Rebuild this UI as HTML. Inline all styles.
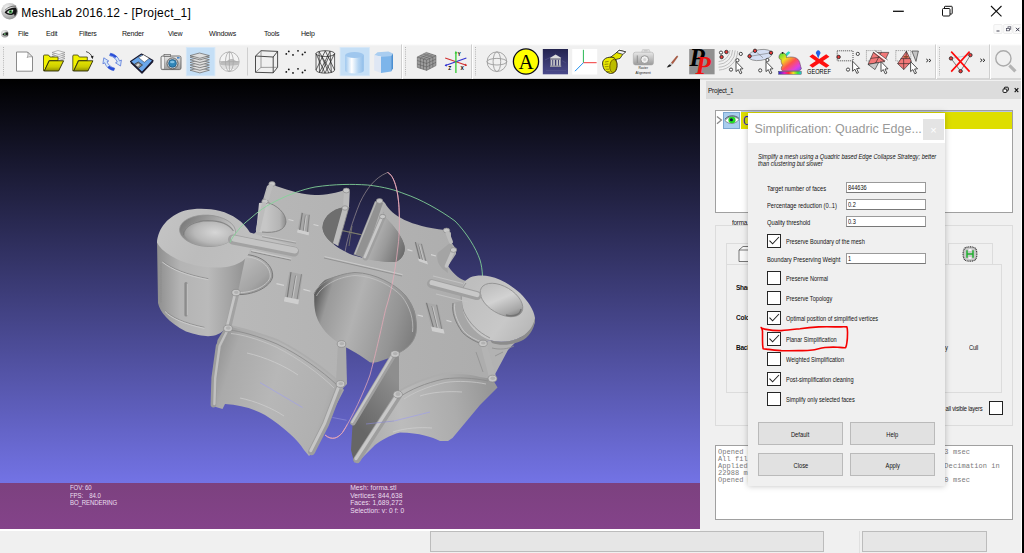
<!DOCTYPE html>
<html>
<head>
<meta charset="utf-8">
<title>MeshLab 2016.12 - [Project_1]</title>
<style>
html,body{margin:0;padding:0;}
body{width:1024px;height:553px;overflow:hidden;background:#f0f0f0;font-family:"Liberation Sans",sans-serif;position:relative;}
.abs{position:absolute;}
#titlebar{left:0;top:0;width:1024px;height:27px;background:#fff;}
#title{left:21.3px;top:5.6px;font-size:12px;letter-spacing:0.19px;color:#000;white-space:nowrap;}
#menubar{left:0;top:27px;width:1024px;height:19px;background:linear-gradient(#fff 0,#fff 17px,#f0f0f0 19px);}
.menu{position:absolute;top:30px;font-size:7px;color:#111;white-space:nowrap;letter-spacing:-0.2px;}
#toolbar{left:0;top:46px;width:1024px;height:33px;background:#f0f0f0;}
.tsep{position:absolute;top:46px;width:1px;height:30px;background:#d0d0d0;}
.thandle{position:absolute;top:47px;width:1px;height:28px;background-image:linear-gradient(#b0b0b0 50%,transparent 50%);background-size:1px 2px;}
.ticon{position:absolute;top:49px;width:24px;height:24px;}
.thl{position:absolute;top:47px;width:29px;height:29px;background:#cce4f7;border:0;}
#viewport{left:0;top:79px;width:700px;height:450px;background:linear-gradient(#000 0%,#8080ff 100%);overflow:hidden;}
#vband{left:0;top:404px;width:700px;height:46px;background:linear-gradient(#7c417f,#84438a);}
.vtxt{position:absolute;font-size:6.7px;line-height:7.5px;color:#eadfee;white-space:pre;letter-spacing:-0.1px;transform:scaleX(.9);transform-origin:0 0;}
#statusbar{left:0;top:529px;width:1024px;height:24px;background:#f0f0f0;}
.sbox{position:absolute;top:531px;height:21px;background:#e6e6e6;border:1px solid #bcbcbc;box-sizing:border-box;}
#dock{left:700px;top:80.2px;width:324px;height:449px;background:#f0f0f0;}
#docktitle{left:706px;top:81px;width:318px;height:18px;background:#dcdcdc;}
.small{font-size:6.5px;color:#111;white-space:nowrap;letter-spacing:-0.25px;}
#layerlist{left:715px;top:110px;width:298px;height:103px;background:#fff;border:1px solid #a0a0a0;box-sizing:border-box;}
#logbox{left:715px;top:445px;width:298px;height:75px;background:#fff;border:1px solid #a0a0a0;box-sizing:border-box;}
.log{position:absolute;font-family:"Liberation Mono",monospace;font-size:7px;letter-spacing:0.07px;line-height:7px;color:#7a7a7a;white-space:pre;}
#dialog{left:748px;top:113px;width:197px;height:373px;background:#f0f0f0;box-shadow:0 0 6px rgba(0,0,0,0.25);}
#dlgtitle{left:0;top:0;width:197px;height:30px;background:#fff;}
#dlgtitletext{left:6.4px;top:9px;font-size:12.5px;color:#999;white-space:nowrap;}
#dlgclose{left:175px;top:6px;width:21px;height:21px;background:#e4e4e4;color:#fff;font-size:11px;text-align:center;line-height:23px;}
.dl{position:absolute;left:18.5px;font-size:7px;color:#111;white-space:nowrap;line-height:8px;transform:scaleX(.825);transform-origin:0 50%;}
.t{display:inline-block;transform:scaleX(.825);transform-origin:0 50%;}
.tc{display:inline-block;transform:scaleX(.825);transform-origin:50% 50%;}
.din{position:absolute;left:98px;width:80px;height:11px;box-sizing:border-box;border:1px solid #9a9a9a;border-bottom-color:#777;background:#fff;font-size:6.8px;line-height:9px;padding-left:0.8px;color:#111;}
.cb{position:absolute;left:18.5px;width:14px;height:14px;box-sizing:border-box;border:1.4px solid #262626;background:#fff;line-height:0;}
.cbl{position:absolute;left:38px;font-size:7px;color:#111;white-space:nowrap;line-height:8px;transform:scaleX(.8);transform-origin:0 50%;}
.btn{position:absolute;width:85px;height:23px;box-sizing:border-box;border:1px solid #bababa;background:#e1e1e1;font-size:7px;color:#111;text-align:center;line-height:23px;}
</style>
</head>
<body>
<!-- TITLE BAR -->
<div id="titlebar" class="abs"></div>
<div id="title" class="abs">MeshLab 2016.12 - [Project_1]</div>
<!-- MENU BAR -->
<div id="menubar" class="abs"></div>
<span class="menu" style="left:18px">File</span>
<span class="menu" style="left:46px">Edit</span>
<span class="menu" style="left:79px">Filters</span>
<span class="menu" style="left:122px">Render</span>
<span class="menu" style="left:168px">View</span>
<span class="menu" style="left:209px">Windows</span>
<span class="menu" style="left:264px">Tools</span>
<span class="menu" style="left:301px">Help</span>
<!-- APPICONS -->
<svg class="abs" style="left:0;top:0" width="22" height="42" viewBox="0 0 22 42">
<defs><radialGradient id="gsph" cx="0.35" cy="0.3" r="0.8"><stop offset="0" stop-color="#f4f4f4"/><stop offset="0.6" stop-color="#bdbdbd"/><stop offset="1" stop-color="#8a8a8a"/></radialGradient></defs>
<circle cx="9.6" cy="11.2" r="8.3" fill="url(#gsph)"/>
<path d="M4.6 12.6 C6.4 9.4,10.4 7.6,15.6 7.4 C16.8 8.4,17.2 10.4,16.6 12.4 C16.2 14.2,15.4 15.6,14.6 16.2 C14.8 14.6,14.2 14,13 14.4 C10.4 15.4,7 15.2,4.6 12.6Z" fill="#151515"/>
<path d="M6.8 12.3 C8.2 10.4,10.6 9.6,13.2 9.8 C13.4 11.4,12.6 12.8,11.4 13.4 C9.6 13.8,8 13.4,6.8 12.3Z" fill="#e4e4e4"/>
<ellipse cx="10.6" cy="11.7" rx="1.9" ry="1.7" fill="#4fae5a"/><circle cx="10.4" cy="11.6" r="0.8" fill="#1a2a1a"/>
<path d="M5 10.2 C8 7,12 5.8,16 6.2" fill="none" stroke="#555" stroke-width="0.8"/>
<circle cx="4.8" cy="33.8" r="3.8" fill="url(#gsph)"/>
<path d="M2.4 34.6 C3.4 33,5.2 32.2,7.6 32.2 C8.2 33,8.2 34.6,7.2 36 C7.2 35.2,6.8 35,6.2 35.2 C5 35.6,3.4 35.6,2.4 34.6Z" fill="#151515"/>
<ellipse cx="4.9" cy="34.1" rx="1" ry="0.8" fill="#7fce88"/>
</svg>
<!-- /APPICONS -->
<!-- TOOLBAR -->
<div id="toolbar" class="abs"></div>
<!-- TBSVG -->
<svg class="abs" style="left:0;top:43px" width="1024" height="38" viewBox="0 43 1024 38" font-family="Liberation Sans, sans-serif">
<defs>
<linearGradient id="gcyl" x1="0" x2="1" y1="0" y2="0"><stop offset="0" stop-color="#9cc6ee"/><stop offset="0.35" stop-color="#ffffff"/><stop offset="0.7" stop-color="#b5d5f2"/><stop offset="1" stop-color="#8fbde9"/></linearGradient>
<linearGradient id="gfold" x1="0" x2="0" y1="0" y2="1"><stop offset="0" stop-color="#e6e600"/><stop offset="0.6" stop-color="#cccc00"/><stop offset="1" stop-color="#8e8e00"/></linearGradient>
<linearGradient id="gcam" x1="0" x2="0" y1="0" y2="1"><stop offset="0" stop-color="#e8e8e8"/><stop offset="1" stop-color="#9a9a9a"/></linearGradient>
<linearGradient id="gbld" x1="0" x2="0" y1="0" y2="1"><stop offset="0" stop-color="#23234f"/><stop offset="1" stop-color="#4b4b8c"/></linearGradient>
<linearGradient id="grain" x1="0" x2="1" y1="0" y2="0"><stop offset="0" stop-color="#2030d0"/><stop offset="0.25" stop-color="#e020c0"/><stop offset="0.45" stop-color="#ff3030"/><stop offset="0.65" stop-color="#f0e020"/><stop offset="0.85" stop-color="#30e040"/><stop offset="1" stop-color="#20c0e0"/></linearGradient>
<linearGradient id="gbun" x1="0" x2="1" y1="0" y2="1"><stop offset="0" stop-color="#30e040"/><stop offset="0.3" stop-color="#f0e020"/><stop offset="0.55" stop-color="#ff5050"/><stop offset="0.8" stop-color="#e040e0"/><stop offset="1" stop-color="#7060f0"/></linearGradient>
<g id="cursor"><path d="M0 0 L0 10 L2.3 8 L4.2 12.2 L5.9 11.4 L4 7.4 L7 7.2 Z" fill="#fff" stroke="#333" stroke-width="0.85" stroke-linejoin="round"/></g>
<g id="opt"><circle r="1.6" fill="#fff" stroke="#333" stroke-width="0.9"/></g>
<g id="rpt"><circle r="1.7" fill="#f03838" stroke="#2a2a2a" stroke-width="0.9"/></g>
</defs>
<!-- bottom edge line -->
<rect x="0" y="78" width="1024" height="2.2" fill="#d6d6d6"/>
<!-- handles and separators -->
<g stroke="#b4b4b4" stroke-width="1" stroke-dasharray="1 1.2"><path d="M3.5 47 V76"/><path d="M405.5 47 V76"/><path d="M475.5 47 V76"/><path d="M939.5 47 V76"/></g>
<g stroke="#cfcfcf" stroke-width="1"><path d="M247.5 47.5 V75.5"/><path d="M401.5 44.5 V79"/><path d="M471.5 44.5 V79"/><path d="M935.5 44.5 V79"/><path d="M989.5 44.5 V79"/></g>
<g stroke="#fff" stroke-width="1"><path d="M402.5 44.5 V79"/><path d="M472.5 44.5 V79"/><path d="M936.5 44.5 V79"/><path d="M990.5 44.5 V79"/></g>
<!-- highlights -->
<rect x="186.3" y="47.4" width="28.6" height="28.4" fill="#c5dff6" stroke="#d6e8f8" stroke-width="0.8"/>
<rect x="340.1" y="47.4" width="29.4" height="28.4" fill="#c5dff6" stroke="#d6e8f8" stroke-width="0.8"/>
<!-- new doc -->
<path d="M16.5 52 H27.5 L32.5 57 V71.2 H16.5 Z" fill="#fff" stroke="#8a8a8a" stroke-width="1" stroke-linejoin="round"/>
<path d="M27.5 52 C28.5 54,28 56,27 57.5 C29 56.6,31 56.6,32.5 57 Z" fill="#e6e6e6" stroke="#8a8a8a" stroke-width="0.7"/>
<!-- folder 1 with layers -->
<g>
<g fill="#f4f4f4" stroke="#777" stroke-width="0.5"><path d="M52 58.5 L58 56.5 L65 58.5 L59 60.5Z"/><path d="M52 56.5 L58 54.5 L65 56.5 L59 58.5Z"/><path d="M52 54.5 L58 52.5 L65 54.5 L59 56.5Z"/><path d="M52 52.5 L58 50.5 L65 52.5 L59 54.5Z"/></g>
<path d="M43.5 70.8 V56 Q43.5 55 44.5 55 H48.5 L50 57 H58 V60.5 H49 L44.5 70.8 Z" fill="#f2f200" stroke="#3a3a10" stroke-width="0.8" stroke-linejoin="round"/>
<path d="M44.3 71 L49.3 60.8 H63.6 L58.6 71 Z" fill="url(#gfold)" stroke="#2a2a08" stroke-width="0.9" stroke-linejoin="round"/>
</g>
<!-- folder 2 with arrow -->
<g>
<path d="M72.8 70.8 V56 Q72.8 55 73.8 55 H77.8 L79.3 57 H87.3 V60.5 H78.3 L73.8 70.8 Z" fill="#f2f200" stroke="#3a3a10" stroke-width="0.8" stroke-linejoin="round"/>
<path d="M73.6 71 L78.6 60.8 H92.9 L87.9 71 Z" fill="url(#gfold)" stroke="#2a2a08" stroke-width="0.9" stroke-linejoin="round"/>
<path d="M86 51.6 C89.5 52.5,91.8 55,92.3 58" fill="none" stroke="#222" stroke-width="0.8"/><path d="M90.8 56.2 L92.6 59.3 L93.6 55.8Z" fill="#222"/>
</g>
<!-- reload -->
<g stroke-linejoin="round">
<path d="M110.5 53.2 C115 54,118.5 57.5,119.5 61 L121.4 60 L120.5 66 L115.5 62.8 L117.3 62 C116 59,113.5 56.5,109.6 55.6 Z" fill="#d4e6f8" stroke="#4668d6" stroke-width="0.7"/>
<path d="M110.5 53.2 C113 53.6,115.4 54.8,117 56.6 L115 58 C113.6 56.7,111.8 55.9,109.6 55.6Z" fill="#2a4fd8"/>
<path d="M113.8 70.6 C109.3 69.8,105.8 66.3,104.8 62.8 L102.9 63.8 L103.8 57.8 L108.8 61 L107 61.8 C108.3 64.8,110.8 67.3,114.7 68.2 Z" fill="#d4e6f8" stroke="#4668d6" stroke-width="0.7"/>
<path d="M113.8 70.6 C111.3 70.2,108.9 69,107.3 67.2 L109.3 65.8 C110.7 67.1,112.5 67.9,114.7 68.2Z" fill="#2a4fd8"/>
</g>
<!-- floppy -->
<g stroke-linejoin="round">
<path d="M130.5 61.5 L141.5 54 L153 60.5 L142 72.3 Z" fill="#6aa6ea" stroke="#1a1a30" stroke-width="1.1"/>
<path d="M138.6 57.6 L143.5 54.8 L149.3 58.3 L144.3 62.3 Z" fill="#fff" stroke="#333" stroke-width="0.5"/>
<path d="M134.3 64.3 L138.3 62 L142.5 65 L138.6 68.2 Z" fill="#888" stroke="#222" stroke-width="0.6"/>
<path d="M136 65.4 L138.2 63.6 L139.8 64.8 L137.8 66.6Z" fill="#ddd"/>
<path d="M131 62.5 L142 73 L153 61.2" fill="none" stroke="#1a1a30" stroke-width="1.4"/>
</g>
<!-- camera -->
<g>
<rect x="161" y="56" width="20" height="13.6" rx="1.6" fill="url(#gcam)" stroke="#555" stroke-width="0.8"/>
<rect x="164" y="54.3" width="6.5" height="2.4" fill="#cfcfcf" stroke="#555" stroke-width="0.6"/>
<rect x="161.4" y="56.6" width="2.8" height="12.4" fill="#f0f0f0" stroke="#777" stroke-width="0.4"/>
<rect x="177" y="57" width="2.6" height="1.6" fill="#4a86c8"/>
<circle cx="172.5" cy="63.4" r="5.5" fill="#d8d8d8" stroke="#444" stroke-width="0.8"/>
<circle cx="172.5" cy="63.4" r="3.9" fill="#2f86b8" stroke="#1d4f78" stroke-width="0.7"/>
<ellipse cx="172.3" cy="62" rx="2.3" ry="1.3" fill="#7fc0e4"/>
</g>
<!-- layers stack -->
<g fill="#dedede" stroke="#666" stroke-width="0.7" stroke-linejoin="round">
<path d="M190 70.2 L199.5 67.6 L209.4 70.2 L199.9 72.9Z"/><path d="M190 67.6 L199.5 65 L209.4 67.6 L199.9 70.3Z"/><path d="M190 65 L199.5 62.4 L209.4 65 L199.9 67.7Z"/><path d="M190 62.4 L199.5 59.8 L209.4 62.4 L199.9 65.1Z"/><path d="M190 59.8 L199.5 57.2 L209.4 59.8 L199.9 62.5Z"/><path d="M190 57.2 L199.5 54.6 L209.4 57.2 L199.9 59.9Z"/><path d="M190 55.6 L199.5 53 L209.4 55.6 L199.9 58.3Z"/>
</g>
<!-- globe raster -->
<g fill="none" stroke="#a8a8a8" stroke-width="0.8">
<circle cx="229.4" cy="61.7" r="9.8" fill="#f4f4f4"/>
<path d="M220 62.8 C223 60.5,225 62,227 61 C230 58.6,233 58.4,235 60.4 C236.6 61.4,238 61,239 61.6 L239 64.5 C236 66,223 66,220 64.5Z" fill="#bdbdbd" stroke="none"/>
<path d="M220.5 66 H238.4 M221.6 68 H237.2" stroke="#c4c4c4"/>
<ellipse cx="229.4" cy="61.7" rx="3.9" ry="9.8"/><path d="M219.6 61.7 H239.2 M229.4 51.9 V71.5"/>
</g>
<!-- cube -->
<g fill="none" stroke="#222" stroke-width="0.8" stroke-linejoin="round">
<path d="M255.5 56 L261 50.7 L277.6 51.4 L273.2 57 Z"/><path d="M255.5 56 V72.3 L273.2 72.8 V57"/><path d="M273.2 72.8 L277.6 67.3 V51.4"/>
<path d="M261 50.7 V67.4 L255.5 72.3 M261 67.4 L277.6 67.3" stroke="#666" stroke-width="0.6"/>
</g>
<!-- dots -->
<g fill="#111">
<circle cx="286.3" cy="53.9" r="0.9"/><circle cx="288.8" cy="51.4" r="0.9"/><circle cx="293" cy="54.9" r="0.9"/><circle cx="298" cy="50.8" r="0.9"/><circle cx="302.5" cy="54.5" r="0.9"/><circle cx="305" cy="52.3" r="0.9"/>
<circle cx="286.3" cy="71.9" r="0.9"/><circle cx="288.8" cy="69.4" r="0.9"/><circle cx="293" cy="72.9" r="0.9"/><circle cx="298" cy="68.8" r="0.9"/><circle cx="302.5" cy="72.5" r="0.9"/><circle cx="305" cy="70.3" r="0.9"/>
</g>
<!-- wire cylinder -->
<g fill="none" stroke="#222" stroke-width="0.7">
<ellipse cx="325.3" cy="53.6" rx="9.3" ry="2.9"/><path d="M316 53.6 V70 C316 74.2,334.6 74.2,334.6 70 V53.6"/>
<path d="M316 53.6 L325 73.1 L334.6 53.6 M316 70 L325.3 50.8 L334.6 70 M319 51.6 L319.5 72.4 L330 51.2 L331.4 72.4 L319 51.6 M321.5 56.3 L328.8 73 M329 56.3 L321.6 73"/>
</g>
<!-- smooth cylinder -->
<path d="M345.2 55 V70.6 C345.2 74.4,363.8 74.4,363.8 70.6 V55 Z" fill="url(#gcyl)"/>
<ellipse cx="354.5" cy="55" rx="9.3" ry="2.9" fill="#9fc7ee"/>
<!-- flat cylinder -->
<g>
<path d="M374.2 55.2 L377.5 52.2 L388.5 51.6 L393 53.4 L391.2 56 L381 56.5 Z" fill="#a9cdf0"/>
<path d="M374.2 55.2 L381 56.5 V73 L374.2 70.6 Z" fill="#dfe7f4"/>
<path d="M381 56.5 L391.2 56 V71.6 L381 73Z" fill="#7db5ea"/>
<path d="M391.2 56 L393 53.4 V68.6 L391.2 71.6Z" fill="#4a8fd2"/>
</g>
<!-- grid cube -->
<g stroke="#555" stroke-width="0.5" fill="#a8a8a8">
<path d="M417.3 57 L426.3 52.4 L436 55.6 V65.6 L426.6 70.4 L417.3 67.4Z" fill="#9c9c9c"/>
<path d="M417.3 57 L426.6 60 L436 55.6 M426.6 60 V70.4 M420.4 58 V68.4 M423.5 59 V69.4 M429.7 58.5 V68.8 M432.8 57 V67.2 M417.3 60.5 L426.6 63.5 L436 59 M417.3 64 L426.6 67 L436 62.3" fill="none"/>
<path d="M420.3 55.5 L429.8 58.5 M423.3 54 L432.8 57 M420.4 58 L429.6 53.6 M423.5 59 L432.8 54.6" fill="none" stroke-width="0.4"/>
</g>
<!-- axes XYZ -->
<g>
<path d="M445.2 58 L466.3 65.2" stroke="#d03030" stroke-width="1.1"/><path d="M466.4 58 L445.4 65.6" stroke="#3030d0" stroke-width="1.1"/>
<path d="M455.9 52 V73" stroke="#30c830" stroke-width="1.3"/>
<path d="M454.6 53.6 L455.9 50.8 L457.2 53.6Z" fill="#30c830"/>
<path d="M464.6 66.2 L467.2 65.6 L465.4 63.6Z" fill="#d03030"/><path d="M447 66.4 L444.6 65.8 L446.4 63.8Z" fill="#3030d0"/>
<text x="457.6" y="55.6" font-size="5" font-weight="bold" fill="#000">Y</text><text x="448.2" y="69.8" font-size="5" font-weight="bold" fill="#000">Z</text><text x="460.6" y="69.8" font-size="5" font-weight="bold" fill="#000">X</text>
</g>
<!-- wire globe -->
<g fill="none" stroke="#9c9c9c" stroke-width="0.9">
<circle cx="496.9" cy="61.7" r="9.8"/><ellipse cx="496.9" cy="61.7" rx="3.8" ry="9.8"/><ellipse cx="496.9" cy="61.7" rx="9.8" ry="3.3"/>
</g>
<!-- A -->
<circle cx="526" cy="61.5" r="12.6" fill="#ffff00" stroke="#0a0a1a" stroke-width="1.3"/>
<text x="526" y="69" font-family="Liberation Serif, serif" font-size="21" text-anchor="middle" fill="#000">A</text>
<!-- building -->
<rect x="542.8" y="49" width="25.2" height="25.3" fill="url(#gbld)"/>
<g fill="#c8c8c8"><path d="M549.8 58 L555.6 54.4 L561.4 58Z" fill="#dcdcdc"/><rect x="550.2" y="58.2" width="10.8" height="1.4" fill="#b4b4b4"/><rect x="550.6" y="59.8" width="1.7" height="6"/><rect x="553.2" y="59.8" width="1.7" height="6"/><rect x="556.3" y="59.8" width="1.7" height="6"/><rect x="558.9" y="59.8" width="1.7" height="6"/><rect x="550" y="65.6" width="11.2" height="1.2" fill="#aaa"/></g>
<path d="M545 60 L550 57.6 M562 60.6 L566 63 M546 70.5 H566" stroke="#5a5a90" stroke-width="0.5" fill="none"/>
<!-- axes RGB -->
<rect x="572.2" y="49" width="25" height="25.5" fill="#fff"/>
<path d="M583.4 62.7 V49.8" stroke="#10b040" stroke-width="0.9"/><path d="M583.4 62.7 H596.6" stroke="#f02020" stroke-width="0.9"/><path d="M583.4 62.7 L575 71.2" stroke="#2090f0" stroke-width="1"/>
<!-- tape -->
<g stroke-linejoin="round">
<g fill="#fff" stroke="#fff" stroke-width="2.4"><path d="M609.5 58 L616 53 L619 50.2 L625.6 51.8 L622.6 54.6 L620 58.5 L614 59.8 Z"/><path d="M602.6 64 C602 58.5,608 56.4,613 57.4 C616.5 58.6,617.4 63,617 67 C616.5 71.5,613.5 73.8,610.5 73.4 C605.5 72.6,603 69,602.6 64 Z"/></g>
<path d="M609.5 58 L616 53 L619 50.2 L625.6 51.8 L622.6 54.6 L620 58.5 L614 59.8 Z" fill="#e4e400" stroke="#1a1a1a" stroke-width="0.8"/>
<path d="M616.8 52.6 L619 50.2 L625.6 51.8 L623 54.4 Z" fill="#f4f4fa" stroke="#1a1a1a" stroke-width="0.7"/>
<path d="M602.6 64 C602 58.5,608 56.4,613 57.4 C616.5 58.6,617.4 63,617 67 C616.5 71.5,613.5 73.8,610.5 73.4 C605.5 72.6,603 69,602.6 64 Z" fill="#eaea00" stroke="#1a1a1a" stroke-width="0.9"/>
<ellipse cx="613.3" cy="66" rx="3.5" ry="6.6" fill="#bcbc00" stroke="#4a2a00" stroke-width="0.6" transform="rotate(6 613.3 66)"/>
<path d="M605 62 L608.6 61.4 M604.6 64.4 L608.4 64 M604.8 66.8 L608.6 66.6 M605.6 69.2 L609 69.2 M607 71.4 L609.8 71.6" stroke="#5a4a00" stroke-width="0.6" fill="none"/>
</g>
<!-- raster alignment camera -->
<g>
<rect x="633.3" y="52.2" width="20.2" height="12.8" rx="2.2" fill="url(#gcam)" stroke="#a4a4a4" stroke-width="0.5"/>
<path d="M641.6 52.2 L642.6 49.6 H649.2 L650.2 52.2Z" fill="#e0e0e0" stroke="#b0b0b0" stroke-width="0.4"/>
<path d="M644 50.8 H647.6" stroke="#aaa" stroke-width="0.5"/>
<circle cx="644.7" cy="59.6" r="3.9" fill="#f0f0f0" stroke="#909090" stroke-width="0.9"/><circle cx="644.7" cy="59.6" r="1.6" fill="#d4d4d4"/>
<rect x="636.8" y="55.4" width="0.9" height="7.6" fill="#8a8a8a"/>
<text x="643.2" y="69.2" font-size="3.7" text-anchor="middle" fill="#222" textLength="9.6" lengthAdjust="spacingAndGlyphs">Raster</text><text x="643.2" y="73.8" font-size="3.7" text-anchor="middle" fill="#222" textLength="15.2" lengthAdjust="spacingAndGlyphs">Alignment</text>
</g>
<!-- brush -->
<g><path d="M671.2 62.8 L677 55.8 L678 56.6 L672.6 64Z" fill="#b05a40" stroke="#703020" stroke-width="0.3"/><path d="M669.6 64.3 L671.2 62.8 L672.6 64 L671.4 65.6Z" fill="#bbb"/><path d="M666.8 67.5 C668 65.5,669 64.8,669.6 64.3 L671.4 65.6 C670.6 66.6,669 67.4,666.8 67.5Z" fill="#222"/></g>
<!-- PP -->
<rect x="689.2" y="49" width="25.4" height="25.3" fill="#909090"/>
<text x="689.6" y="65.8" font-family="Liberation Serif, serif" font-size="25" font-style="italic" font-weight="bold" fill="#000">P</text>
<text x="695.6" y="74" font-family="Liberation Serif, serif" font-size="25" font-style="italic" font-weight="bold" fill="#ee1111">P</text>
<!-- select points -->
<g fill="none" stroke="#b0b0b0" stroke-width="0.8"><path d="M730 50 A12 12 0 0 1 718.6 61.6 M732.6 50 A14.6 14.6 0 0 1 718.6 64.4 M735.2 50.4 A17 17 0 0 1 718.6 67.2 M737.6 51 A19.4 19.4 0 0 1 719 70"/></g>
<use href="#opt" x="721" y="52.6"/><use href="#rpt" x="726.4" y="52"/><use href="#rpt" x="721.6" y="57"/><use href="#opt" x="740.8" y="53.9"/><use href="#opt" x="737.4" y="60.2"/><use href="#opt" x="731" y="69.6"/>
<use href="#cursor" x="736" y="61.6"/>
<!-- select ellipse -->
<ellipse cx="760.2" cy="55" rx="12" ry="5.4" transform="rotate(-8 760.2 55)" fill="#d4def2" stroke="#888" stroke-width="0.8"/>
<path d="M749.6 56.4 L771 52.8 M757 52.6 L763 57.8" stroke="#666" stroke-width="0.5"/>
<use href="#rpt" x="755" y="50.8"/><use href="#rpt" x="749.6" y="56.2"/><use href="#rpt" x="771" y="52.8"/><use href="#opt" x="767.4" y="60"/><use href="#opt" x="760.2" y="70.4"/>
<use href="#cursor" x="766" y="61.6"/>
<!-- bunny -->
<g>
<path d="M783.6 55.4 L788.4 51.2 L790.4 52.6 L786.6 56.6Z" fill="#30d8c0"/>
<path d="M779 58 C778.6 55,780.6 52.6,783.4 53 C785.6 53.4,786.8 55.6,786.4 57.6 C790 56.6,796.4 56.4,798.8 60.4 C800.4 63,800.2 66,801.4 68.4 C801.2 70,799.6 70.8,797 70.8 L782.4 70.8 C780.8 69.6,781 67,782.6 65.4 C781.4 63.6,780.8 61.4,781.2 59.6 C780.2 59.4,779.2 58.8,779 58Z" fill="url(#gbun)" stroke="#503050" stroke-width="0.5"/>
<circle cx="782.6" cy="52.8" r="0.9" fill="#111"/>
<rect x="778.6" y="71.4" width="22.6" height="2.8" fill="url(#grain)" stroke="#334" stroke-width="0.4"/>
</g>
<!-- georef -->
<g>
<path d="M809.4 56.6 L812.6 54.2 L819.2 59 L826.2 54.2 L829.4 56.8 L823 61 L829.4 65.4 L826.2 67.8 L819.2 63.2 L812.6 67.8 L809.4 65.2 L815.8 61Z" fill="#ff1010"/>
<path d="M818.2 58.6 L816.6 54.4 A2.3 2.3 0 1 1 819.8 54.4Z" fill="#2060e8"/>
<text x="819" y="74" font-size="7" text-anchor="middle" fill="#000" textLength="23.8" lengthAdjust="spacingAndGlyphs">GEOREF</text>
</g>
<!-- select rect -->
<rect x="837.2" y="50.8" width="15.8" height="10" fill="none" stroke="#333" stroke-width="0.9" stroke-dasharray="1 1"/>
<use href="#rpt" x="838.6" y="57"/><use href="#opt" x="857.8" y="53.9"/><use href="#opt" x="848" y="69.6"/>
<use href="#cursor" x="852.6" y="61.2"/>
<!-- tri select 1 -->
<g stroke="#222" stroke-width="0.6" stroke-linejoin="round">
<rect x="866.4" y="50.6" width="15" height="10.4" fill="none" stroke="#555" stroke-dasharray="1 1"/>
<path d="M873.4 52.4 L888.8 52.4 L884.4 61.6 Z" fill="#f27878"/>
<path d="M873.4 52.4 L868 64.4 L884.4 61.6 Z" fill="#f27878"/><path d="M870.6 58.4 L878.6 57.4 L875.6 63 M878.6 57.4 L881.2 52.6" fill="none"/>
<path d="M868 64.4 L875 69.6 L878.6 62.6Z" fill="#c8c8c8"/>
<path d="M874.4 51.2 L887 60.6" stroke="#fff" stroke-width="1.8"/><path d="M874.8 50.6 L887.6 60" stroke="#222" stroke-width="0.6"/>
</g>
<use href="#cursor" x="881" y="61.6"/>
<!-- tri select 2 -->
<g stroke="#222" stroke-width="0.6" stroke-linejoin="round">
<rect x="895.8" y="50.6" width="15" height="10.4" fill="none" stroke="#555" stroke-dasharray="1 1"/>
<path d="M906.4 51.2 L897.6 63.6 L903.8 69.6 L911.4 61.4Z" fill="#f27878"/>
<path d="M900.6 58.6 H910.4 M897.6 63.6 H909.6 M903.8 69.6 L903.6 58.6 M906.4 51.2 L906 58.6" fill="none"/>
<path d="M911.8 51 H918.4 L916 61.4Z" fill="#c4c4c4"/><path d="M903.6 56.8 H908.4" stroke="#8a4a20" stroke-width="1.4"/>
</g>
<use href="#cursor" x="910.6" y="61.6"/>
<!-- chevrons -->
<g fill="none" stroke="#111" stroke-width="0.9"><path d="M926.3 59 L928.2 60.5 L926.3 62 M929 59 L930.9 60.5 L929 62"/><path d="M980.3 58.8 L982.2 60.3 L980.3 61.8 M983 58.8 L984.9 60.3 L983 61.8"/></g>
<!-- red X tool -->
<g>
<path d="M951 58.4 L970.4 55.1" stroke="#9ab" stroke-width="0.6"/><path d="M951 58.4 L960.6 71.2 L970.4 55.1" fill="none" stroke="#333" stroke-width="0.6"/>
<use href="#rpt" x="951" y="58.4"/><use href="#rpt" x="970.4" y="55.1"/><use href="#rpt" x="960.6" y="71.2"/>
<path d="M951.2 51.6 L969.6 71.6 M969.6 51.6 L951.2 71.6" stroke="#ff0a0a" stroke-width="1.6"/>
</g>
<!-- magnifier -->
<circle cx="1003.4" cy="58.4" r="7.6" fill="none" stroke="#aaa" stroke-width="1.4"/>
<path d="M1009.4 65.4 L1015.4 71.4" stroke="#b4b4b4" stroke-width="3.2"/>
</svg>
<!-- /TBSVG -->
<!-- VIEWPORT -->
<div id="viewport" class="abs">
<!-- MESH -->
<svg class="abs" style="left:0;top:0" width="700" height="450" viewBox="0 79 700 450">
<defs>
<linearGradient id="mC1" x1="157" x2="250" y1="0" y2="0" gradientUnits="userSpaceOnUse"><stop offset="0" stop-color="#8e8e8e"/><stop offset="0.25" stop-color="#b4b4b4"/><stop offset="0.55" stop-color="#bababa"/><stop offset="0.8" stop-color="#a2a2a2"/><stop offset="1" stop-color="#8c8c8c"/></linearGradient>
<linearGradient id="mC1top" x1="160" x2="250" y1="215" y2="265" gradientUnits="userSpaceOnUse"><stop offset="0" stop-color="#c4c4c4"/><stop offset="0.5" stop-color="#bcbcbc"/><stop offset="1" stop-color="#c0c0c0"/></linearGradient>
<linearGradient id="mHole1" x1="185" x2="225" y1="220" y2="246" gradientUnits="userSpaceOnUse"><stop offset="0" stop-color="#7c7c7c"/><stop offset="0.5" stop-color="#a4a4a4"/><stop offset="1" stop-color="#cacaca"/></linearGradient>
<linearGradient id="mFinL" x1="212" x2="340" y1="380" y2="420" gradientUnits="userSpaceOnUse"><stop offset="0" stop-color="#9a9a9a"/><stop offset="0.1" stop-color="#aaaaaa"/><stop offset="0.45" stop-color="#b7b7b7"/><stop offset="0.85" stop-color="#b0b0b0"/><stop offset="1" stop-color="#a0a0a0"/></linearGradient>
<linearGradient id="mFinR" x1="370" x2="490" y1="420" y2="400" gradientUnits="userSpaceOnUse"><stop offset="0" stop-color="#b0b0b0"/><stop offset="0.25" stop-color="#bcbcbc"/><stop offset="0.7" stop-color="#acacac"/><stop offset="1" stop-color="#989898"/></linearGradient>
<linearGradient id="mWallC" x1="315" x2="415" y1="300" y2="330" gradientUnits="userSpaceOnUse"><stop offset="0" stop-color="#5e5e5e"/><stop offset="0.12" stop-color="#9a9a9a"/><stop offset="0.4" stop-color="#b2b2b2"/><stop offset="0.8" stop-color="#949494"/><stop offset="1" stop-color="#7e7e7e"/></linearGradient>
<linearGradient id="mWallT" x1="368" x2="405" y1="235" y2="250" gradientUnits="userSpaceOnUse"><stop offset="0" stop-color="#bcbcbc"/><stop offset="0.5" stop-color="#9a9a9a"/><stop offset="1" stop-color="#6c6c6c"/></linearGradient>
<linearGradient id="mWallL" x1="245" x2="272" y1="260" y2="290" gradientUnits="userSpaceOnUse"><stop offset="0" stop-color="#b8b8b8"/><stop offset="0.6" stop-color="#a4a4a4"/><stop offset="1" stop-color="#868686"/></linearGradient>
<linearGradient id="mInnerR" x1="352" x2="396" y1="420" y2="380" gradientUnits="userSpaceOnUse"><stop offset="0" stop-color="#666"/><stop offset="1" stop-color="#8e8e8e"/></linearGradient>
<linearGradient id="mC2" x1="470" x2="535" y1="285" y2="335" gradientUnits="userSpaceOnUse"><stop offset="0" stop-color="#bebebe"/><stop offset="0.6" stop-color="#c8c8c8"/><stop offset="1" stop-color="#b4b4b4"/></linearGradient>
<linearGradient id="mHole2" x1="485" x2="520" y1="287" y2="313" gradientUnits="userSpaceOnUse"><stop offset="0" stop-color="#bcbcbc"/><stop offset="0.45" stop-color="#d2d2d2"/><stop offset="0.8" stop-color="#a8a8a8"/><stop offset="1" stop-color="#767676"/></linearGradient>
<radialGradient id="mBowl1" cx="0.62" cy="0.45" r="0.7"><stop offset="0" stop-color="#d6d6d6"/><stop offset="0.6" stop-color="#b8b8b8"/><stop offset="1" stop-color="#8e8e8e"/></radialGradient>
<linearGradient id="mWallTL" x1="266" x2="286" y1="0" y2="0" gradientUnits="userSpaceOnUse"><stop offset="0" stop-color="#c6c6c6"/><stop offset="0.7" stop-color="#b4b4b4"/><stop offset="1" stop-color="#8c8c8c"/></linearGradient>
<linearGradient id="mPlate" x1="240" x2="480" y1="0" y2="0" gradientUnits="userSpaceOnUse"><stop offset="0" stop-color="#b8b8b8"/><stop offset="1" stop-color="#adadad"/></linearGradient>
<linearGradient id="mBg" x1="0" x2="0" y1="79" y2="529" gradientUnits="userSpaceOnUse"><stop offset="0" stop-color="#000"/><stop offset="1" stop-color="#8080ff"/></linearGradient>
</defs>
<!-- trackball circles behind mesh -->
<g fill="none" stroke-width="0.9">
<path d="M296 192.3 C302 190.2,308 188.4,315 187 C335 184,352 184,367.5 185 C385 187,395 190,405 194 C420 199,440 210,455 221 C466 232,476 248,480 260 C483 270,483 282,482 292" stroke="#7fce96"/>
<path d="M345 252 C347 240,352 222,360 202.5 C366 190,374 178,387.5 172.5" stroke="#9a8f92" stroke-width="0.7"/>
<path d="M387.5 172.5 C394 175,398 190,399 207.5 C400 225,399 240,397.5 250 C396 265,392 290,386 308 C383 320,378 345,370 375 C364 392,352 418,342.5 432.5 C338 438,332 441,325 435" stroke="#e5a2b2"/>
<path d="M332.5 417.5 L366 424" stroke="#8c8cd8" stroke-width="0.7"/><path d="M340 230 L362.5 235 M352 226 L349 246" stroke="#85856e" stroke-width="0.7"/>
</g>
<!-- under-walls -->
<path d="M314 294 C318 284,335 274,355 272.5 C375 273,395 284,405 295 C414 306,418 320,416 333 C414 342,408 349,396 354 L390 360 L370 360 C355 352,348 348,341 344 C330 338,320 326,316 312 Z" fill="url(#mWallC)" stroke="url(#mWallC)" stroke-width="5" stroke-linejoin="round"/>
<path d="M245 255 C262 256,273 266,272 277 C270 286,255 294,238 294 L240 262 Z" fill="url(#mWallL)" stroke="url(#mWallL)" stroke-width="4" stroke-linejoin="round"/>
<path d="M341 208 C330 211,323 218,322.5 227.5 C323 234,327 239,333 243.5 L343 208 Z" fill="#6e6e6e" stroke="#6e6e6e" stroke-width="3" stroke-linejoin="round"/>
<path d="M385 217 C390 222,400 232,404 244 C406 250,404 258,396 262 C385 262.5,374 261,364 258.5 Z" fill="url(#mWallT)" stroke="url(#mWallT)" stroke-width="4" stroke-linejoin="round"/>
<!-- ===== plate top-left wing + cutout wall between P1/P2 ===== -->
<path d="M256 232 L262 203 L267 186 L272 182.5 L276 186 C290 191,305 195,315 195 C325 195,338 193,346 189.5 L349.5 192 L349 206 L340 208 C330 211,323 218,322.5 227.5 C323 238,336 248,352.5 255 C368 260,385 262.5,396 262 C404 258,406 250,404 244 C400 232,390 222,385 217 L379 202 L381.5 199.5 L385 203 C392 216,410 226,445 230 L448 229 L451 233 L451 242 L456 249 L456 254 L448 266 C455 276,460 279,466 281 L470 278 L490 290 L490 340 L482.5 344 L492.5 379 L480 377 C462 373,440 374,412 385 L397 394 L395 354 C410 345,418 330,415 312 C410 295,395 285,380 278 C360 271,340 273,325 280 C315 288,312 298,316 315 C320 328,330 338,341 344 L340 384 C330 372,305 355,277 341 C255 332,235 328,227 328 L230 310 L238 294 C255 294,270 286,272 277 C273 266,262 256,245 255 L240 262 L236 250 Z" fill="url(#mPlate)"/>
<!-- cutout wall between P1 and P2 (top-left) -->
<path d="M259 203 L266 202 C277 205,286 213,286 222 C285 230,276 233.5,262 232 L256 232 Z" fill="url(#mWallTL)"/>
<path d="M266 202 C277 205,286 213,286 222 C285 230,276 233.5,262 232" fill="none" stroke="#7e7e7e" stroke-width="0.9"/>
<!-- top cutout contents -->
<path d="M381 204 L385 217 C390 222,400 232,404 244 C406 250,404 258,396 262 C385 262.5,374 261,364 258.5 Z" fill="url(#mWallT)"/>
<path d="M341 208 C330 211,323 218,322.5 227.5 C323 234,327 239,333 243.5 L343 208 Z" fill="#6e6e6e"/>
<path d="M342 230.6 L361 234.6" stroke="#85856e" stroke-width="0.7"/>
<!-- post inside top cutout -->
<path d="M375 201 L383 203 L364.5 258 L353.5 254.5 Z" fill="#929292"/><path d="M376 202 L355 254" stroke="#b8b8b8" stroke-width="1.4"/>
<path d="M382.8 217 L365.5 257.5" stroke="#a0a0a0" stroke-width="6" stroke-linecap="round"/><path d="M382 217 L364.8 257" stroke="#c8c8c8" stroke-width="2.6" stroke-linecap="round"/>
<ellipse cx="382.6" cy="216.6" rx="3" ry="2.2" fill="#c8c8c8" stroke="#8a8a8a" stroke-width="0.7"/>
<!-- P3/P4 posts -->
<path d="M344 190 L349.5 191 L349 207 L338 246 L333 243 L343 207 Z" fill="#bcbcbc"/><path d="M349 207 L338 246" stroke="#8a8a8a" stroke-width="0.8"/>
<!-- LEFT cutout wall -->
<path d="M245 255 C262 256,273 266,272 277 C270 286,255 294,238 294 L240 262 Z" fill="url(#mWallL)"/>
<path d="M246 254.5 C263 256,273.5 266,272.6 277 C270.5 286.5,255 294.6,239 294.6" fill="none" stroke="#7a7a7a" stroke-width="1"/><path d="M246 256.6 C261 258,271 267,270.2 277 C268.4 285,254 292.4,240 292.6" fill="none" stroke="#c9c9c9" stroke-width="0.9"/>
<!-- RIGHT cutout -->
<path d="M437.5 253 C436 262,440 268,448 273 L447 266 L454 250 L451 242 Z" fill="#a4a4a4"/>
<path d="M453 251 L446.5 266" stroke="#c2c2c2" stroke-width="3.6" stroke-linecap="round"/>
<!-- CENTRAL cutout wall -->
<path d="M314 294 C318 284,335 274,355 272.5 C375 273,395 284,405 295 C414 306,418 320,416 333 C414 342,408 349,396 354 L390 360 L370 360 C355 352,348 348,341 344 C330 338,320 326,316 312 Z" fill="url(#mWallC)"/>
<path d="M314 294 C318 284,335 274,355 272.5 C375 273,395 284,405 295 C414 306,418 320,416 333 C414 342,408 349,396 354" fill="none" stroke="#8c8c8c" stroke-width="1"/>
<path d="M316.5 296 C321 287,336 277,355 275.5 C374 276,392 286,402 296.5 C410 307,414 320,412.5 332" fill="none" stroke="#c6c6c6" stroke-width="0.7"/>
<!-- background seen below central wall -->
<path d="M341 345 C350 349,362 356,372 364 L392 357 L366 402 L352 424 L352 450 L340 384 Z" fill="url(#mBg)"/>
<!-- ===== C1 cylinder ===== -->
<path d="M157 240 L158 303 C160 312,168 322,186 331.5 C195 334.5,203 336,208 336.2 C215 336.2,221 334,226 328 L232 310 L238 292 L246 254 L230 262 L200 262 L170 252 Z" fill="url(#mC1)"/>
<path d="M157 242.5 C158 228,168 216,185 210.5 C196 208,210 208.5,220 211 C232 214,244 222,250 232.5 L297 247 L296 255 L250 249 C249 255,245 260,240 262.5 C232 267,222 268,215 267.5 C200 267,188 264,180 260.5 C168 255,160 249,157 242.5Z" fill="url(#mC1top)"/>
<ellipse cx="207.5" cy="230.8" rx="28" ry="15.7" fill="url(#mHole1)" stroke="#909090" stroke-width="0.7" transform="rotate(3 207.5 230.8)"/>
<ellipse cx="209" cy="233.4" rx="25" ry="12.8" fill="url(#mBowl1)" transform="rotate(3 209 233.4)"/>
<path d="M183.5 235 C184 226,195 221,208 220.6 C219 220.6,229 224,233.5 231" fill="none" stroke="#787878" stroke-width="1.1" opacity="0.75"/>
<!-- C1 side grooves -->
<g fill="none" stroke-linecap="round"><path d="M162.6 261.2 C172 268.5,186 274.5,208 278.6 M165.4 310.8 C171 317,184 323,204 327.2" stroke="#8c8c8c" stroke-width="0.8"/><path d="M162.6 262.3 C172 269.6,186 275.6,208 279.7 M165.4 311.9 C171 318.1,184 324.1,204 328.3" stroke="#cbcbcb" stroke-width="1"/><path d="M186 283.5 V315" stroke="#8c8c8c" stroke-width="3.2"/><path d="M187.3 284 V315" stroke="#cdcdcd" stroke-width="0.9"/><path d="M161 264 V302" stroke="#8a8a8a" stroke-width="0.7" stroke-dasharray="1 1.2"/></g>
<!-- arm C1 -> plate -->
<path d="M233 239.5 L294 251.5" stroke="#a2a2a2" stroke-width="10" stroke-linecap="round"/>
<path d="M234 238.5 L295 250.5" stroke="#c4c4c4" stroke-width="6" stroke-linecap="round"/>
<path d="M262 235.6 L296 242" stroke="#c6c6c6" stroke-width="1.1"/><path d="M262 236.8 L296 243.2" stroke="#8e8e8e" stroke-width="0.7"/>
<!-- ===== C2 cylinder ===== -->
<path d="M490 340 C498 343,512 342,520 337.5 L508 350 L493 378 L482.5 344 Z" fill="#b2b2b2"/><path d="M492 348 C500 350,508 349,514 346 M495 356 L503 352" stroke="#8e8e8e" stroke-width="0.8" fill="none"/>
<path d="M465 281 L470 277.5 C476 275,484 275,490 276.5 C500 278,512 286,520 293 C528 301,534 310,535 318 C535 324,533 328,530 330 C526 335,522 337,520 337.5 C512 342,498 343,490 340 C478 336,468 326,463 312 C460 300,461 288,465 281Z" fill="url(#mC2)"/>
<path d="M520 337.5 C526 335,533 328,535 318 L535 321 C534 330,528 338,521 341 C512 345,500 346,492 343 L490 340 C498 343,512 342,520 337.5Z" fill="#8c8c8c"/>
<ellipse cx="501.5" cy="300" rx="23.5" ry="13.5" fill="url(#mHole2)" stroke="#909090" stroke-width="0.8" transform="rotate(31 501.5 300)"/>
<path d="M521 309 C520 315,514 317,506 315" fill="none" stroke="#6a6a6a" stroke-width="1.4" opacity="0.7"/>
<!-- C2 inner ring going to plate -->
<path d="M466 283 C460 290,460 302,464 312 C470 324,478 332,490 338" fill="none" stroke="#8a8a8a" stroke-width="0.8"/>
<path d="M453 303 C451.5 312,455 322,462.5 332.5 C468 338,475 341.5,482 344 L489 340 C478 336,468 326,463 312 L462 301 Z" fill="#a6a6a6"/><path d="M453 303 C451.5 312,455 322,462.5 332.5 C468 338,475 341.5,482 344" fill="none" stroke="#7e7e7e" stroke-width="1"/><path d="M454.8 303.5 C453.4 312,457 321.6,464 331.4 C469 336.6,476 340,482.6 342.4" fill="none" stroke="#cacaca" stroke-width="0.9"/>
<!-- arm plate -> C2 -->
<path d="M431.5 283.6 L477 295.6" stroke="#a0a0a0" stroke-width="9" stroke-linecap="round"/>
<path d="M432 282.6 L477 294.6" stroke="#c8c8c8" stroke-width="5" stroke-linecap="round"/>
<path d="M433 276 L463 283.5 M436 294 L468 302" stroke="#c2c2c2" stroke-width="1.2"/>
<!-- ===== Left fin ===== -->
<path d="M227 326 C236 328,256 333,277.5 341 C300 352,325 370,340 384" fill="none" stroke="#adadad" stroke-width="3.5"/>
<path d="M226 326 C236 328,256 333,277.5 341 C300 352,325 370,340 384 L344 390 L337.5 402.5 L325 425 L315 450 L309 456 L304 450 C298 440,285 428,265 415 C252 408,240 405,225 404 L222.5 409 L212.5 406 L211 400 L212.5 375 L217.5 340 Z" fill="url(#mFinL)"/>
<path d="M229 330 C240 331,258 336,277 344 C300 355,322 371,337 385" fill="none" stroke="#8c8c8c" stroke-width="0.9"/>
<path d="M231 333.5 C242 334.5,258 339,276 347 C298 358,320 374,334 388" fill="none" stroke="#c8c8c8" stroke-width="0.8"/>
<path d="M247 353 C265 357,285 366,298 375 M240 398 C255 401,272 408,284 416" fill="none" stroke="#d0d0d0" stroke-width="0.7"/>
<path d="M260 382.5 L302.5 407.5" stroke="#a0a0e8" stroke-width="0.7"/>
<!-- left fin left post -->
<path d="M227 330 L218.6 346 L214.2 378 L213.4 404.6" fill="none" stroke="#9c9c9c" stroke-width="5.6" stroke-linecap="round"/>
<path d="M227.6 330 L219.6 346 L215.2 378 L214.4 404" fill="none" stroke="#c0c0c0" stroke-width="2.4" stroke-linecap="round"/>
<!-- left fin right post -->
<path d="M340 386 L325.6 424 L311.6 451.6" fill="none" stroke="#9e9e9e" stroke-width="7" stroke-linecap="round"/>
<path d="M339 386 L324.6 423.4 L310.8 450.6" fill="none" stroke="#c6c6c6" stroke-width="3" stroke-linecap="round"/>
<!-- left fin end face between P11 and P10 -->
<path d="M338 343 L346 345 L347 384 L341 390 L336 382 Z" fill="#ababab"/>
<!-- P5 post -->
<path d="M236 294 L228.4 326" stroke="#a2a2a2" stroke-width="6.4" stroke-linecap="round"/><path d="M235 294 L227.4 325" stroke="#c6c6c6" stroke-width="2.6" stroke-linecap="round"/>
<!-- ===== Right fin ===== -->
<path d="M397 394 C405 388,420 381,442 375 C455 373,470 374,480 377 L492.5 379" fill="none" stroke="#adadad" stroke-width="3.5"/>
<path d="M392 354 L399 356 L399 394 L354 462 L351 450 L352.5 425 L367 400 Z" fill="url(#mInnerR)"/>
<path d="M393.4 355.4 L353 422.6" stroke="#a0a0a0" stroke-width="5.6" stroke-linecap="round"/><path d="M392.6 355 L352.2 422" stroke="#c6c6c6" stroke-width="2.4" stroke-linecap="round"/>
<path d="M397 394 C405 388,420 381,442 375 C455 373,470 374,480 377 L492.5 379 L497.5 387.5 L480 405 L452.5 438 L448 441 L440 441 C432 437,420 433,400 432.5 C390 435,380 441,375 445 L360 460 L354 462.5 Z" fill="url(#mFinR)"/>
<path d="M401 396 C410 390,425 383,444 379 C458 377,474 378,488 381" fill="none" stroke="#8c8c8c" stroke-width="0.9"/>
<path d="M404 399 C413 393,427 386.5,445 382.5 C458 380.5,474 381.5,486 384" fill="none" stroke="#c8c8c8" stroke-width="0.8"/>
<path d="M420 396 C432 392,448 391,462 392 M393 432 C405 428,420 427,432 428" fill="none" stroke="#d0d0d0" stroke-width="0.7"/>
<path d="M394 421 L430 412" stroke="#a0a0e8" stroke-width="0.7"/>
<!-- right fin left post (P13 -> bottom) -->
<path d="M398 396 L357 459.4" stroke="#9e9e9e" stroke-width="7.4" stroke-linecap="round"/><path d="M397 395.4 L356 458.6" stroke="#c8c8c8" stroke-width="3.2" stroke-linecap="round"/>
<!-- right fin end face P15-P14 -->
<path d="M480 343 L487 345 L497 380 L490 381 Z" fill="#b4b4b4"/>
<path d="M476 352 L483 372" stroke="#8c8c8c" stroke-width="0.7"/>
<!-- ===== post tops (small ellipses) ===== -->
<g fill="#c8c8c8" stroke="#8a8a8a" stroke-width="0.7">
<ellipse cx="272" cy="184" rx="3.2" ry="2.4"/><ellipse cx="265" cy="201.5" rx="3.2" ry="2.4"/><ellipse cx="346.3" cy="190.5" rx="3.2" ry="2.4"/><ellipse cx="345" cy="208" rx="3" ry="2.2"/>
<ellipse cx="379.5" cy="201" rx="3.2" ry="2.4"/><ellipse cx="446.5" cy="230.5" rx="3.2" ry="2.4"/><ellipse cx="453.5" cy="250" rx="3.2" ry="2.4"/>
<ellipse cx="236" cy="292.6" rx="4.2" ry="3.2"/><ellipse cx="228" cy="328.4" rx="4.4" ry="3.4"/><ellipse cx="341.5" cy="344" rx="4.3" ry="3.3"/><ellipse cx="340.5" cy="384" rx="4.4" ry="3.4"/>
<ellipse cx="395" cy="354" rx="4.3" ry="3.3"/><ellipse cx="397.8" cy="394.4" rx="4.6" ry="3.6"/><ellipse cx="483" cy="343.4" rx="4.2" ry="3.2"/><ellipse cx="492.5" cy="378.6" rx="4.4" ry="3.4"/>
</g>
<g fill="#b2b2b2" stroke="none"><ellipse cx="236.3" cy="292.3" rx="2.3" ry="1.6"/><ellipse cx="228.3" cy="328" rx="2.4" ry="1.7"/><ellipse cx="341.8" cy="343.6" rx="2.4" ry="1.7"/><ellipse cx="340.8" cy="383.6" rx="2.4" ry="1.7"/><ellipse cx="395.3" cy="353.6" rx="2.4" ry="1.7"/><ellipse cx="398.1" cy="394" rx="2.6" ry="1.9"/><ellipse cx="483.3" cy="343" rx="2.3" ry="1.6"/><ellipse cx="492.8" cy="378.2" rx="2.4" ry="1.7"/></g>
<!-- post shafts P1,P2 -->
<path d="M271 186 L267 198" stroke="#bcbcbc" stroke-width="4" stroke-linecap="round"/><path d="M264 204 L258 230" stroke="#bcbcbc" stroke-width="4.4" stroke-linecap="round"/>
<path d="M447.5 233 L451 242" stroke="#bcbcbc" stroke-width="4" stroke-linecap="round"/>
<!-- slot details on plate -->
<g>
<path d="M301.3 212.5 L310.0 215.0 L308.8 235.6 L296.9 232.5 Z" fill="#a8a8a8" stroke="none"/>
<path d="M297.6 229.3 L309.0 232.3 L308.8 235.6 L296.9 232.5 Z" fill="#cfcfcf" stroke="none"/>
<path d="M302.3 212.8 L299.7 229.8" stroke="#777" stroke-width="1.1" fill="none"/>
<path d="M309.3 214.8 L307.4 231.9" stroke="#848484" stroke-width="1" fill="none"/>
<path d="M305.4 215.5 L303.3 230.8" stroke="#808080" stroke-width="0.9" fill="none"/>
<path d="M306.3 215.7 L304.2 231.0" stroke="#cdcdcd" stroke-width="0.8" fill="none"/>
<path d="M289.4 271.8 L302.6 274.4 L298.4 304.4 L283.8 301.4 Z" fill="#a8a8a8" stroke="none"/>
<path d="M284.7 296.7 L299.1 299.6 L298.4 304.4 L283.8 301.4 Z" fill="#cfcfcf" stroke="none"/>
<path d="M291.0 272.1 L287.3 297.2" stroke="#777" stroke-width="1.1" fill="none"/>
<path d="M301.5 274.2 L297.1 299.2" stroke="#848484" stroke-width="1" fill="none"/>
<path d="M295.6 275.6 L291.9 298.1" stroke="#808080" stroke-width="0.9" fill="none"/>
<path d="M296.5 275.8 L292.8 298.3" stroke="#cdcdcd" stroke-width="0.8" fill="none"/>
<path d="M414.5 242.0 L422.0 244.0 L428.0 264.5 L418.8 261.3 Z" fill="#a8a8a8" stroke="none"/>
<path d="M418.1 258.2 L427.0 261.2 L428.0 264.5 L418.8 261.3 Z" fill="#cfcfcf" stroke="none"/>
<path d="M415.4 242.2 L419.7 258.8" stroke="#777" stroke-width="1.1" fill="none"/>
<path d="M421.4 243.8 L425.8 260.8" stroke="#848484" stroke-width="1" fill="none"/>
<path d="M418.7 244.7 L422.6 259.7" stroke="#808080" stroke-width="0.9" fill="none"/>
<path d="M419.6 244.9 L423.5 259.9" stroke="#cdcdcd" stroke-width="0.8" fill="none"/>
<path d="M425.0 302.5 L437.6 305.0 L444.6 333.8 L432.2 331.2 Z" fill="#a8a8a8" stroke="none"/>
<path d="M431.0 326.6 L443.5 329.2 L444.6 333.8 L432.2 331.2 Z" fill="#cfcfcf" stroke="none"/>
<path d="M426.5 302.8 L433.3 327.1" stroke="#777" stroke-width="1.1" fill="none"/>
<path d="M436.6 304.8 L441.7 328.8" stroke="#848484" stroke-width="1" fill="none"/>
<path d="M431.9 306.2 L437.3 327.9" stroke="#808080" stroke-width="0.9" fill="none"/>
<path d="M432.8 306.4 L438.2 328.1" stroke="#cdcdcd" stroke-width="0.8" fill="none"/>
<path d="M324 258 L402 276" stroke="#8a8a8a" stroke-width="0.8"/><path d="M324.5 256.6 L402.5 274.6" stroke="#cacaca" stroke-width="1"/>
<path d="M251 251.6 L291 260.2" stroke="#888" stroke-width="0.9"/><path d="M251.4 250.4 L291.4 259" stroke="#cacaca" stroke-width="1.2"/>
<g stroke="#d4d4d4" stroke-width="1.1" fill="none"><path d="M288.5 219.5 L293.5 220.7 M313.5 224.5 L318.5 225.7 M276.5 283.6 L284 285.4 M303.4 289.4 L310.4 291.2 M407.5 249.6 L412.5 251 M431 254.6 L436 256 M417.5 315 L423 316.4 M446.5 320.4 L451.5 321.8"/></g>
</g>
<path d="M230 242.5 C232 238,235 234,237.5 231 C241 226,246 222,250 218.75 C254 215,258 212,262.5 208.75 C268 205,273 202.5,278 200 C284 197,290 194.5,296 192.3" fill="none" stroke="#86d49a" stroke-width="0.9"/>
<!-- pink arc in front (over mesh, faint) -->
<path d="M387.5 172.5 C394 175,398 190,399 207.5 C400 225,399 240,397.5 250 C396 265,392 290,386 308 C383 320,378 345,370 375 C364 392,352 418,342.5 432.5 C338 438,332 441,325 435" fill="none" stroke="#e6aab8" stroke-width="0.85" opacity="0.9"/>
<path d="M366 424 L394 421" stroke="#8c8cd8" stroke-width="0.6"/>
</svg>
<!-- /MESH -->
<div id="vband" class="abs"></div>
<div class="vtxt" style="left:69.8px;top:405px">FOV: 60
FPS:    84.0
BO_RENDERING</div>
<div class="vtxt" style="left:350.2px;top:405px;transform:none;letter-spacing:0.04px">Mesh: forma.stl
Vertices: 844,638
Faces: 1,689,272
Selection: v: 0 f: 0</div>
</div>
<!-- DOCK -->
<div id="dock" class="abs"></div>
<div id="docktitle" class="abs"></div>
<span class="abs small" style="left:707.8px;top:87px;font-size:7px"><span class="t" style="transform:scaleX(.93)">Project_1</span></span>
<svg class="abs" style="left:1000px;top:85px" width="22" height="10" viewBox="0 0 22 10"><rect x="4.3" y="2.2" width="4" height="3.6" rx="0.8" fill="none" stroke="#111" stroke-width="1"/><rect x="3" y="4" width="3.8" height="3.4" rx="0.8" fill="#fff" stroke="#111" stroke-width="1"/><path d="M14.7 3.2 L18.3 7.2 M18.3 3.2 L14.7 7.2" stroke="#111" stroke-width="1.1"/></svg>
<div id="layerlist" class="abs">
 <svg class="abs" style="left:0;top:4px" width="8" height="10" viewBox="0 0 8 10"><path d="M1 1.4 L5.4 5 L1 8.8" fill="none" stroke="#888" stroke-width="1.3"/></svg>
 <div class="abs" style="left:6.6px;top:1px;width:17.2px;height:17px;background:#a9cdee;border:0.5px solid #7aa7d0;box-sizing:border-box;"></div>
 <svg class="abs" style="left:8px;top:3px" width="16" height="13" viewBox="0 0 16 13"><path d="M1 6.6 C4 1.8,11 1.4,15 5.6 C11 10.5,5 10.6,1 6.6Z" fill="#fff" stroke="#555" stroke-width="0.6"/><ellipse cx="8" cy="6" rx="3.6" ry="3.2" fill="#22dd22"/><circle cx="7.4" cy="5.8" r="1.5" fill="#101040"/><path d="M1 5.2 C4 1,11 0.6,15 4.4" fill="none" stroke="#333" stroke-width="0.7"/></svg>
 <div class="abs" style="left:25px;top:0;width:271px;height:17.6px;background:#dede00;border-top:0.8px solid #b8c4e8;box-sizing:border-box"></div>
 <div class="abs" style="left:27px;top:3px;font-size:13px;line-height:13px;color:#1c1ccc;">0</div>
</div>
<span class="abs small" style="left:731.8px;top:219.4px;font-size:7px"><span class="t" style="transform:scaleX(.9)">forma.stl</span></span>
<div class="abs" style="left:715px;top:225px;width:298px;height:201px;border:1px solid #dcdcdc;box-sizing:border-box;"></div>
<div class="abs" style="left:726px;top:243px;width:45px;height:21px;border:1px solid #dcdcdc;border-bottom:0;box-sizing:border-box;background:#f0f0f0"></div>
<div class="abs" style="left:948px;top:243px;width:45px;height:21px;border:1px solid #dcdcdc;border-bottom:0;box-sizing:border-box;background:#f0f0f0"></div>
<svg class="abs" style="left:737px;top:245px" width="22" height="18" viewBox="0 0 22 18"><path d="M2 5 L6 1.5 L20 1.5 L20 13 L16 16.5 L2 16.5 Z M2 5 L16 5 L16 16.5 M16 5 L20 1.5" fill="#f8f8f8" stroke="#555" stroke-width="0.8"/></svg>
<svg class="abs" style="left:962px;top:246px" width="16" height="16" viewBox="0 0 16 16"><path d="M3 2 C5 0.5,11 0.5,13 2 C15.5 4,15.5 12,13 14 C11 15.6,5 15.6,3 14 C0.5 12,0.5 4,3 2Z" fill="#c8c8c8" stroke="#333" stroke-width="1.2" stroke-dasharray="1 0.7"/><path d="M5 4.2 V11.8 M11 4.2 V11.8 M5 8 H11" stroke="#1fae2f" stroke-width="1.5" fill="none"/><path d="M6.5 4 H9.5 M6.5 12 H9.5" stroke="#fff" stroke-width="1.6"/></svg>
<div class="abs" style="left:726px;top:264px;width:276px;height:129px;border:1px solid #dcdcdc;box-sizing:border-box;"></div>
<span class="abs small" style="left:735.5px;top:284px;font-size:7px;font-weight:bold"><span class="t" style="transform:scaleX(.93)">Shading</span></span>
<span class="abs small" style="left:735.5px;top:313.5px;font-size:7px;font-weight:bold"><span class="t" style="transform:scaleX(.93)">Color</span></span>
<span class="abs small" style="left:735.5px;top:343.5px;font-size:7px;font-weight:bold"><span class="t" style="transform:scaleX(.93)">Back-Face</span></span>
<span class="abs small" style="left:933px;top:343.5px;font-size:7px"><span class="t">Fancy</span></span>
<span class="abs small" style="left:969px;top:343.5px;font-size:7px"><span class="t">Cull</span></span>
<span class="abs small" style="left:924.5px;top:405px;font-size:7px"><span class="t">Apply to all visible layers</span></span>
<div class="abs" style="left:989px;top:401px;width:14px;height:14px;border:1.2px solid #222;box-sizing:border-box;background:#fff"></div>
<div id="logbox" class="abs"></div>
<div class="log" style="left:718px;top:448.6px">Opened mesh C:/Users/user/Desktop/3d/forma.stl in 3803 msec
All files opened in 3808 msec
Applied filter Simplification: Quadric Edge Collapse Decimation in
22988 msec
Opened mesh C:/Users/user/Desktop/3d/forma.stl in 3860 msec</div>
<!-- right edge -->
<div class="abs" style="left:1020.7px;top:0;width:1.3px;height:553px;background:#fff;z-index:49"></div>
<div class="abs" style="left:1022px;top:0;width:2px;height:553px;background:#000;z-index:50"></div>
<!-- window controls -->
<svg class="abs" style="left:880px;top:0" width="142" height="36" viewBox="0 0 142 36"><path d="M13 11.3 H23.8" stroke="#111" stroke-width="1.3"/><rect x="62.5" y="8.5" width="7.5" height="7.5" rx="1" fill="none" stroke="#111" stroke-width="1"/><path d="M64.5 8.5 V7 Q64.5 6.3 65.2 6.3 H71.5 Q72.2 6.3 72.2 7 V13.3 Q72.2 14 71.5 14 H70" fill="none" stroke="#111" stroke-width="1"/><path d="M111 6 L121.5 16.3 M121.5 6 L111 16.3" stroke="#111" stroke-width="1.1"/>
<g fill="#fafafa" stroke="#e4e4e4" stroke-width="0.6"><rect x="113.8" y="24.5" width="8.3" height="9" rx="1"/><rect x="123.6" y="24.5" width="8.6" height="9" rx="1"/><rect x="133" y="24.5" width="8.2" height="9" rx="1"/></g>
<path d="M116.5 31 H119.5" stroke="#445" stroke-width="1"/><rect x="128" y="26.8" width="2.8" height="2.4" fill="none" stroke="#445" stroke-width="0.7"/><rect x="126.6" y="28.4" width="2.8" height="2.4" fill="#fafafa" stroke="#445" stroke-width="0.7"/><path d="M136 27.8 L139.4 31.2 M139.4 27.8 L136 31.2" stroke="#334" stroke-width="1"/></svg>
<!-- STATUS -->
<div id="statusbar" class="abs"></div>
<div class="abs" style="left:0;top:529px;width:700px;height:1.5px;background:#fff"></div>
<div class="sbox" style="left:430px;width:394px"></div>
<div class="sbox" style="left:862px;width:125px"></div>
<div class="abs" style="left:859px;top:531px;width:1px;height:22px;background:#e0e0e0"></div>
<!-- DIALOG -->
<div id="dialog" class="abs">
<div id="dlgtitle" class="abs"></div>
<div id="dlgtitletext" class="abs">Simplification: Quadric Edge...</div>
<div id="dlgclose" class="abs">×</div>
<div class="dl" style="left:9.6px;top:39.8px;font-style:italic;line-height:7px;transform:scaleX(.815)">Simplify a mesh using a Quadric based Edge Collapse Strategy; better<br>than clustering but slower</div>
<div class="dl" style="top:71.8px">Target number of faces</div><div class="din" style="top:69px"><span class="t">844636</span></div>
<div class="dl" style="top:88.8px">Percentage reduction (0..1)</div><div class="din" style="top:86px"><span class="t">0.2</span></div>
<div class="dl" style="top:105.8px">Quality threshold</div><div class="din" style="top:103px"><span class="t">0.3</span></div>
<div class="cb" style="top:121px"><svg width="12" height="12" viewBox="0 0 12 12"><path d="M1.5 5.6 L4.6 8.8 L11 2" fill="none" stroke="#222" stroke-width="1.05"/></svg></div><div class="cbl" style="top:124.5px">Preserve Boundary of the mesh</div>
<div class="dl" style="top:142.8px">Boundary Preserving Weight</div><div class="din" style="top:140px"><span class="t">1</span></div>
<div class="cb" style="top:158px"></div><div class="cbl" style="top:161.5px">Preserve Normal</div>
<div class="cb" style="top:178px"></div><div class="cbl" style="top:181.5px">Preserve Topology</div>
<div class="cb" style="top:198px"><svg width="12" height="12" viewBox="0 0 12 12"><path d="M1.5 5.6 L4.6 8.8 L11 2" fill="none" stroke="#222" stroke-width="1.05"/></svg></div><div class="cbl" style="top:201.5px">Optimal position of simplified vertices</div>
<div class="cb" style="top:219px"><svg width="12" height="12" viewBox="0 0 12 12"><path d="M1.5 5.6 L4.6 8.8 L11 2" fill="none" stroke="#222" stroke-width="1.05"/></svg></div><div class="cbl" style="top:222.5px">Planar Simplification</div>
<div class="cb" style="top:239px"></div><div class="cbl" style="top:242.5px">Weighted Simplification</div>
<div class="cb" style="top:259px"><svg width="12" height="12" viewBox="0 0 12 12"><path d="M1.5 5.6 L4.6 8.8 L11 2" fill="none" stroke="#222" stroke-width="1.05"/></svg></div><div class="cbl" style="top:262.5px">Post-simplification cleaning</div>
<div class="cb" style="top:279px"></div><div class="cbl" style="top:282.5px">Simplify only selected faces</div>
<div class="btn" style="left:10px;top:309px"><span class="tc">Default</span></div>
<div class="btn" style="left:102px;top:309px"><span class="tc">Help</span></div>
<div class="btn" style="left:10px;top:340px"><span class="tc">Close</span></div>
<div class="btn" style="left:102px;top:340px"><span class="tc">Apply</span></div>
<svg class="abs" style="left:0;top:200px;overflow:visible" width="197" height="50"><path d="M13.2 14.5 C15 16,17 16.2,18.2 16.4 C24 17.5,28 17.8,33.2 17.6 C40 17.2,46 16.4,52 15.7 C58 14.8,64 14.2,70.7 13.9 C78 13.6,84 13.8,89.5 13.9 C93 13.9,96 13.7,98.9 13.9 C99.6 16,99.6 18,99.5 20.7 C99.5 24,99.3 27,98.9 29.5 C98.6 32,98.2 33.5,97.6 34.7 C95 34.9,92 34.4,89.5 34.2 C85 34,81 34.1,77 34.5 C72 35.2,68 36.5,64.5 37 C60 37.6,56 37.7,52 37.6 C45 37.7,39 37.8,33.2 37.6 C28 37.3,24 36.9,20.7 36.4 C18.5 36.1,16.5 36,15.1 35.7 C14.6 33,14.5 30,14.5 27 C14.5 24,14.5 21,14.5 18.2 C14.3 16.5,13.8 15.3,13.2 14.5" fill="none" stroke="#f60000" stroke-width="1.6" stroke-linejoin="round" stroke-linecap="round"/></svg>
</div>
</body>
</html>
